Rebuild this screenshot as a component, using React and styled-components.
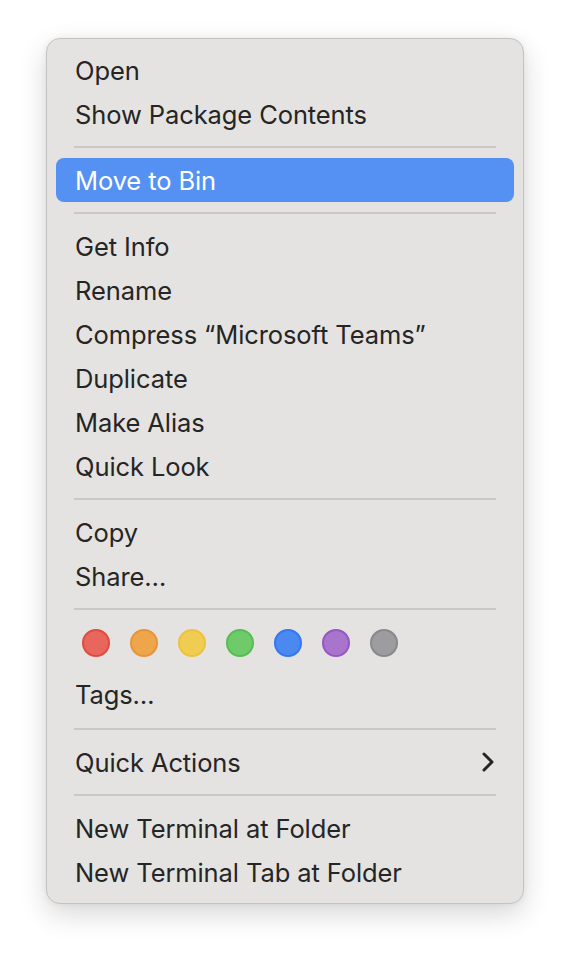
import React from "react";
import styled, { createGlobalStyle } from "styled-components";

const GlobalStyle = createGlobalStyle`
  html, body {
    margin: 0;
    padding: 0;
    background: #ffffff;
  }
  body {
    font-family: "Inter", "Noto Sans", "Liberation Sans", sans-serif;
    -webkit-font-smoothing: antialiased;
  }
`;

const Page = styled.div`
  width: 570px;
  height: 958px;
  padding: 38px 0 0 46px;
  box-sizing: border-box;
`;

const Menu = styled.div`
  width: 478px;
  box-sizing: border-box;
  padding: 9px 9px 9px;
  background: #e4e3e2;
  border: 1px solid #c4c3c2;
  border-radius: 14px;
  box-shadow: 0 10px 28px rgba(0, 0, 0, 0.16), 0 0 6px rgba(0, 0, 0, 0.06);
  display: flex;
  flex-direction: column;
`;

const Item = styled.div`
  height: 44px;
  flex-shrink: 0;
  display: flex;
  align-items: center;
  justify-content: space-between;
  padding: 0 20px 0 19px;
  margin-bottom: ${(p) => p.gapAfter || 0}px;
  border-radius: 8px;
  font-size: 25.5px;
  letter-spacing: -0.1px;
  color: ${(p) => (p.active ? "#ffffff" : "#252525")};
  background: ${(p) => (p.active ? "#5591f2" : "transparent")};
`;

const Separator = styled.div`
  height: 22px;
  display: flex;
  align-items: center;
  padding: 0 18px;

  &::after {
    content: "";
    flex: 1;
    height: 2px;
    background: #c9c8c7;
  }
`;

const Dots = styled.div`
  display: flex;
  gap: 20px;
  padding: 9px 0 15px 26px;
`;

const Dot = styled.span`
  width: 28px;
  height: 28px;
  box-sizing: border-box;
  border-radius: 50%;
  background: ${(p) => p.fill};
  border: 2px solid ${(p) => p.edge};
`;

const Chevron = () => (
  <svg width="12" height="20" viewBox="0 0 12 20">
    <path
      d="M2 2 L10 10 L2 18"
      fill="none"
      stroke="#252525"
      strokeWidth="3"
      strokeLinecap="round"
      strokeLinejoin="round"
    />
  </svg>
);

const tags = [
  ["#e8665b", "#e04b40"],
  ["#eea54b", "#e8953a"],
  ["#f0cd52", "#ecc23f"],
  ["#6fcb6a", "#57bc51"],
  ["#4a8af0", "#3477ef"],
  ["#a874cc", "#9458c3"],
  ["#9d9c9f", "#89888b"],
];

export default function App() {
  return (
    <Page>
      <GlobalStyle />
      <Menu>
        <Item>Open</Item>
        <Item>Show Package Contents</Item>
        <Separator />
        <Item active>Move to Bin</Item>
        <Separator />
        <Item>Get Info</Item>
        <Item>Rename</Item>
        <Item>Compress “Microsoft Teams”</Item>
        <Item>Duplicate</Item>
        <Item>Make Alias</Item>
        <Item>Quick Look</Item>
        <Separator />
        <Item>Copy</Item>
        <Item>Share…</Item>
        <Separator />
        <Dots>
          {tags.map(([fill, edge]) => (
            <Dot key={fill} fill={fill} edge={edge} />
          ))}
        </Dots>
        <Item gapAfter={2}>Tags…</Item>
        <Separator />
        <Item>
          Quick Actions
          <Chevron />
        </Item>
        <Separator />
        <Item>New Terminal at Folder</Item>
        <Item>New Terminal Tab at Folder</Item>
      </Menu>
    </Page>
  );
}
